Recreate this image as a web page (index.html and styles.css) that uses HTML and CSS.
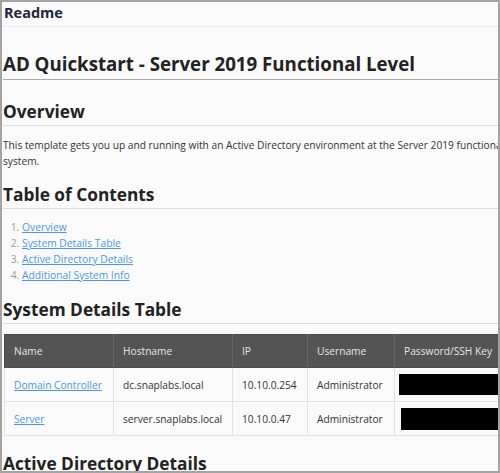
FILE: index.html
```html
<!DOCTYPE html>
<html>
<head>
<meta charset="utf-8">
<link rel="stylesheet" href="styles.css">
</head>
<body>
<div class="frame">
  <div class="titlebar">Readme</div>
  <div class="content">
    <h1>AD Quickstart - Server 2019 Functional Level</h1>
    <h2 class="h-overview">Overview</h2>
    <p class="intro">This template gets you up and running with an Active Directory environment at the Server 2019 functional level for a<br>system.</p>
    <h2 class="h-toc">Table of Contents</h2>
    <ol class="toc">
      <li><a href="#">Overview</a></li>
      <li><a href="#">System Details Table</a></li>
      <li><a href="#">Active Directory Details</a></li>
      <li><a href="#">Additional System Info</a></li>
    </ol>
    <h2 class="h-sys">System Details Table</h2>
    <table class="systems">
      <colgroup>
        <col class="c-name">
        <col class="c-host">
        <col class="c-ip">
        <col class="c-user">
        <col class="c-pass">
      </colgroup>
      <thead>
        <tr>
          <th>Name</th>
          <th>Hostname</th>
          <th>IP</th>
          <th>Username</th>
          <th>Password/SSH Key</th>
        </tr>
      </thead>
      <tbody>
        <tr class="row1">
          <td><a href="#">Domain Controller</a></td>
          <td>dc.snaplabs.local</td>
          <td>10.10.0.254</td>
          <td>Administrator</td>
          <td><span class="redact r1"></span></td>
        </tr>
        <tr class="row2">
          <td><a href="#">Server</a></td>
          <td>server.snaplabs.local</td>
          <td>10.10.0.47</td>
          <td>Administrator</td>
          <td><span class="redact r2"></span></td>
        </tr>
      </tbody>
    </table>
    <h2 class="h-ad">Active Directory Details</h2>
  </div>
</div>
</body>
</html>
```
FILE: styles.css
```css
html, body {
  margin: 0;
  padding: 0;
  background: #fafafa;
}
.frame {
  box-sizing: border-box;
  width: 500px;
  height: 473px;
  border: 2px solid #a3a3a3;
  background: #fafafa;
  overflow: hidden;
  font-family: "Open Sans", "Noto Sans", sans-serif;
  color: #333;
}
.titlebar {
  height: 24px;
  line-height: 22px;
  padding-left: 2px;
  font-size: 14.5px;
  font-weight: 700;
  color: #23253c;
  border-bottom: 1px solid #ebebef;
}
.content {
  width: 900px;
  padding-left: 1px;
}
h1 {
  margin: 22px 0 0 0;
  font-size: 18.7px;
  line-height: 30px;
  font-weight: 700;
  color: #222;
  border-bottom: 1px solid #a8a8a8;
  width: 495px;
}
h2 {
  font-size: 17.3px;
  line-height: 27px;
  font-weight: 700;
  color: #222;
  margin: 0;
  border-bottom: 1px solid #dcdcdc;
}
.h-overview { margin-top: 18px; }
.intro {
  margin: 11px 0 0 0;
  font-size: 10.2px;
  line-height: 16px;
  color: #333;
}
.h-toc { margin-top: 12px; }
.toc {
  margin: 10px 0 0 0;
  padding-left: 19px;
  font-size: 10.3px;
  line-height: 16px;
}
.toc li { color: #9a9a9a; }
a { color: #4d97e6; text-decoration: underline; }
.h-sys { margin-top: 13px; }
.systems {
  margin-top: 10px;
  margin-left: 1px;
  border-collapse: collapse;
  table-layout: fixed;
  width: 590px;
  font-size: 10.2px;
  color: #333;
}
.c-name { width: 109px; }
.c-host { width: 119px; }
.c-ip { width: 75px; }
.c-user { width: 87px; }
.c-pass { width: 200px; }
.systems th {
  background: #545454;
  color: #e4e4e4;
  font-weight: 400;
  text-align: left;
  height: 32px;
  padding: 0 9px;
  border: 1px solid #4c4c4c;
  border-right-color: #666;
}
.systems td {
  height: 33px;
  padding: 0 9px;
  border: 1px solid #e2e2e2;
  white-space: nowrap;
}
.systems td:last-child { padding: 0 0 0 4px; }
.redact {
  display: block;
  height: 21px;
  background: #000;
  width: 200px;
}
.r2 { margin-left: 2px; height: 22px; }
.h-ad { margin-top: 14px; border-bottom: none; }
```
